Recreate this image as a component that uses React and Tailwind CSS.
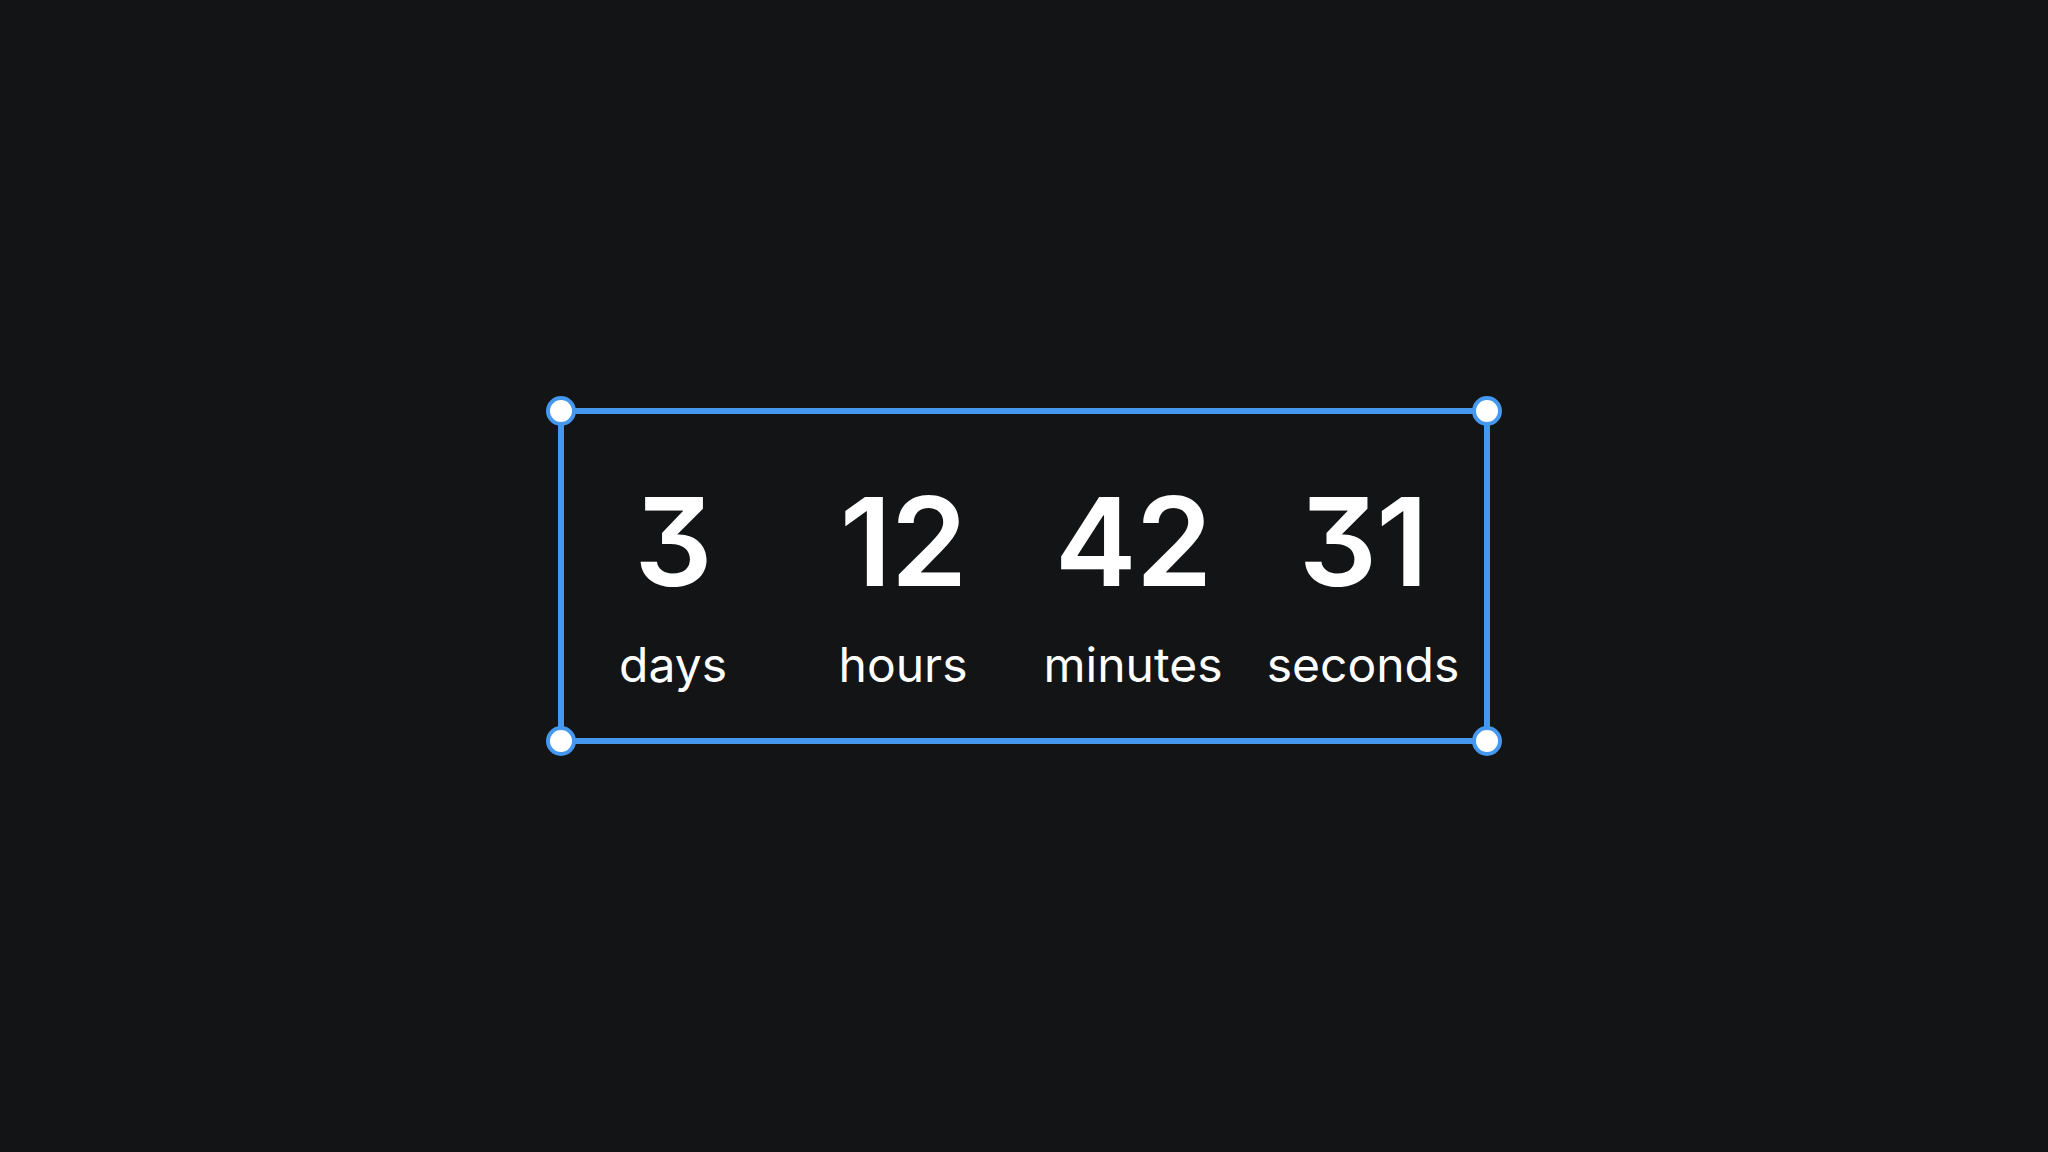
import React from "react";

const units = [
  { value: "3", label: "days" },
  { value: "12", label: "hours" },
  { value: "42", label: "minutes" },
  { value: "31", label: "seconds" },
];

function Handle({ pos }) {
  return (
    <span
      className={`absolute ${pos} h-[30px] w-[30px] rounded-full border-[4px] border-[#4598ef] bg-white`}
    />
  );
}

export default function App() {
  return (
    <div
      className="flex h-screen w-full items-center justify-center bg-[#131416] text-white"
      style={{ fontFamily: "Inter, 'Noto Sans', sans-serif" }}
    >
      <div className="relative w-[932px] border-[6px] border-[#4598ef] pt-[66px] pb-[49px]">
        <div className="-ml-[6px] grid w-[920px] grid-cols-4">
          {units.map((u) => (
            <div key={u.label} className="flex flex-col items-center gap-[38px]">
              <span className="text-[123px] font-semibold leading-none tracking-[-1px] [font-feature-settings:'cv09']">
                {u.value}
              </span>
              <span className="text-[48px] font-normal leading-none">{u.label}</span>
            </div>
          ))}
        </div>
        <Handle pos="-left-[18px] -top-[18px]" />
        <Handle pos="-right-[18px] -top-[18px]" />
        <Handle pos="-left-[18px] -bottom-[18px]" />
        <Handle pos="-right-[18px] -bottom-[18px]" />
      </div>
    </div>
  );
}
